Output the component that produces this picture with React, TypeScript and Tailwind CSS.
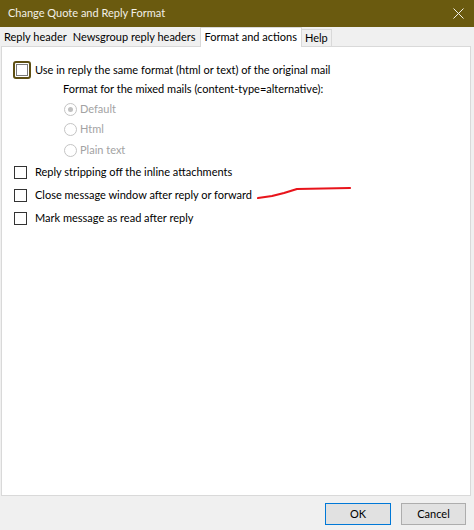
import React from 'react'

function Checkbox({ focused }: { focused?: boolean }) {
  if (focused)
    return (
      <span className="w-[18px] h-[18px] rounded-[3px] border-2 border-[#5e4f12] flex items-center justify-center bg-white">
        <span className="w-[12px] h-[12px] border border-[#7a7a7a] bg-white" />
      </span>
    )
  return <span className="w-[13px] h-[13px] border border-[#333333] bg-white shrink-0" />
}

function Radio({ checked }: { checked?: boolean }) {
  return (
    <span className="w-[13px] h-[13px] rounded-full border border-[#c4c4c4] bg-white flex items-center justify-center shrink-0">
      {checked && <span className="w-[5px] h-[5px] rounded-full bg-[#c0c0c0]" />}
    </span>
  )
}

const tabs = ['Reply header', 'Newsgroup reply headers', 'Format and actions', 'Help']

export default function App() {
  return (
    <div
      className="relative w-[474px] h-[530px] bg-[#f0f0f0] flex flex-col text-[11px] text-black overflow-hidden"
      style={{ fontFamily: 'Lato, "Liberation Sans", sans-serif' }}
    >
      {/* Title bar */}
      <div className="h-[27px] bg-[#6a5a0f] flex items-center justify-between pl-[8px] pr-[9px] text-[#f2f0e6] text-[11px]">
        <span>Change Quote and Reply Format</span>
        <svg width="11" height="11" viewBox="0 0 11 11" className="mr-[1px]">
          <path d="M0.5 0.5 L10.5 10.5 M10.5 0.5 L0.5 10.5" stroke="#f2f0e6" strokeWidth="1" />
        </svg>
      </div>

      {/* Tabs */}
      <div className="h-[19px] flex items-end pl-[1px] relative z-10">
        {tabs.map((t, i) => {
          const selected = i === 2
          return (
            <div
              key={t}
              className={
                selected
                  ? 'h-[20px] px-[4px] ml-[1px] bg-white border border-b-0 border-[#d9d9d9] flex items-center -mb-[1px]'
                  : i === 3
                  ? 'h-[17px] px-[3px] bg-[#f0f0f0] border border-b-0 border-l-0 border-[#d9d9d9] flex items-center'
                  : 'h-[17px] px-[3px] flex items-center'
              }
            >
              {t}
            </div>
          )
        })}
      </div>

      {/* Panel */}
      <div className="ml-[1px] mr-[3px] h-[450px] bg-white border border-[#d9d9d9] flex flex-col pl-[11px]">
        <div className="mt-[13px] h-[20px] flex items-center gap-[4px]">
          <Checkbox focused />
          <span>Use in reply the same format (html or text) of the original mail</span>
        </div>
        <div className="h-[19px] flex items-center pl-[50px]">
          Format for the mixed mails (content-type=alternative):
        </div>
        <div className="h-[20px] flex items-center gap-[3px] pl-[51px] text-[#a3a3a3]">
          <Radio checked />
          <span>Default</span>
        </div>
        <div className="h-[21px] flex items-center gap-[3px] pl-[51px] text-[#a3a3a3]">
          <Radio />
          <span>Html</span>
        </div>
        <div className="h-[21px] flex items-center gap-[3px] pl-[51px] text-[#a3a3a3]">
          <Radio />
          <span>Plain text</span>
        </div>
        <div className="h-[22px] flex items-center gap-[8px] pl-[1px]">
          <Checkbox />
          <span>Reply stripping off the inline attachments</span>
        </div>
        <div className="h-[24px] flex items-center gap-[8px] pl-[1px]">
          <Checkbox />
          <span>Close message window after reply or forward</span>
        </div>
        <div className="h-[23px] flex items-center gap-[8px] pl-[1px]">
          <Checkbox />
          <span>Mark message as read after reply</span>
        </div>
      </div>

      {/* Buttons */}
      <div className="flex justify-end gap-[10px] pr-[8px] pt-[7px]">
        <button className="w-[66px] h-[22px] bg-[#e1e1e1] border border-[#0078d7] flex items-center justify-center">
          OK
        </button>
        <button className="w-[65px] h-[22px] bg-[#e1e1e1] border border-[#adadad] flex items-center justify-center">
          Cancel
        </button>
      </div>

      {/* Red annotation stroke */}
      <svg className="absolute left-[256px] top-[184px]" width="98" height="18" viewBox="0 0 98 18">
        <path d="M2 14 L16 12 L28 9 L41 5 L94 4" stroke="#e8141b" strokeWidth="2.2" fill="none" strokeLinecap="round" strokeLinejoin="round" />
      </svg>
    </div>
  )
}
